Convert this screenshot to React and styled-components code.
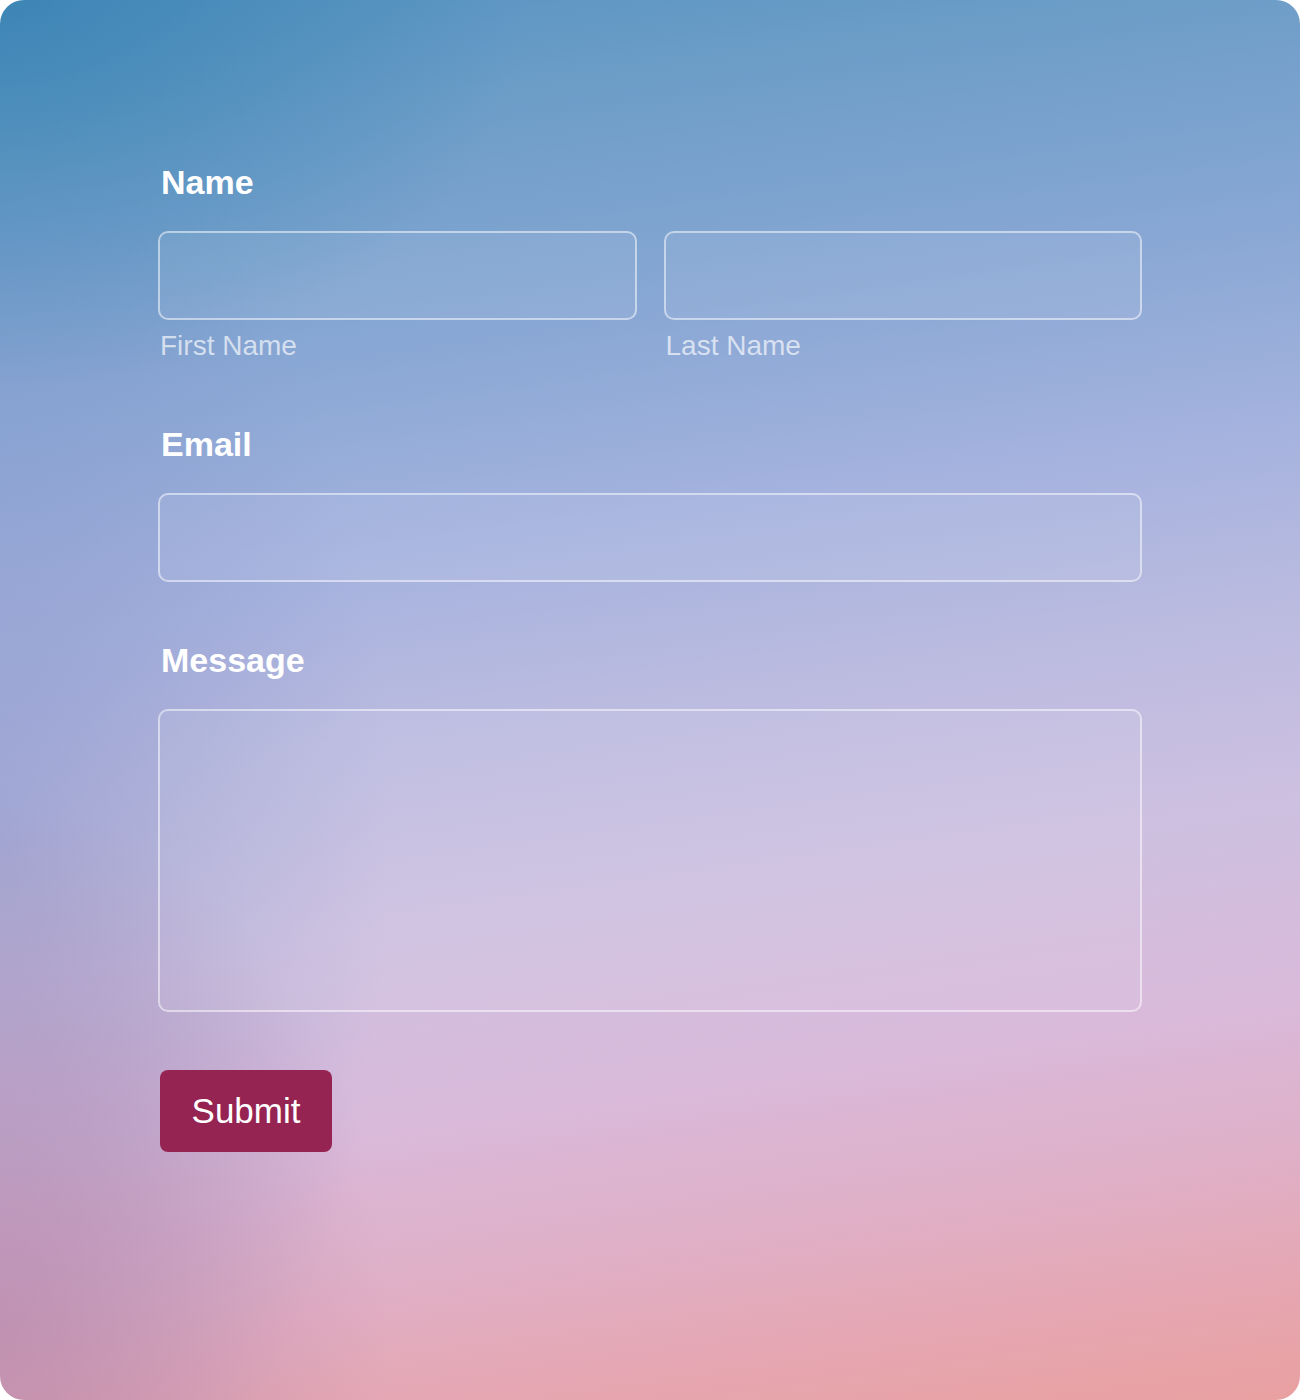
import styled, { createGlobalStyle } from 'styled-components'

const GlobalStyle = createGlobalStyle`
    html, body {
        margin: 0;
        padding: 0;
        background: #ffffff;
    }
    * {
        box-sizing: border-box;
    }
`

const Card = styled.div`
    width: 1300px;
    height: 1400px;
    border-radius: 24px;
    overflow: hidden;
    padding: 162px 158px 0 158px;
    font-family: "Liberation Sans", Arial, sans-serif;
    background:
        radial-gradient(ellipse 520px 700px at 0% 95%, rgba(180, 125, 160, 0.55), rgba(180, 125, 160, 0) 75%),
        radial-gradient(ellipse 700px 520px at 0% 0%, rgba(45, 125, 175, 0.6), rgba(45, 125, 175, 0) 75%),
        radial-gradient(ellipse 520px 1000px at 0% 60%, rgba(125, 140, 195, 0.45), rgba(125, 140, 195, 0) 75%),
        linear-gradient(172deg, #5592c0 0%, #6b9dc7 10%, #86a6d3 24%, #a4b2de 38%, #bbbbe0 50%, #cdc0e0 62%, #d9badb 74%, #dfb0c8 84%, #e5a7b3 92%, #e9a0a0 100%);
`

const Form = styled.form`
    display: flex;
    flex-direction: column;
`

const Field = styled.div`
    display: flex;
    flex-direction: column;
    margin-bottom: ${({ $gap }) => $gap}px;
`

const Label = styled.label`
    display: block;
    padding-left: 3px;
    margin-bottom: 29px;
    font-size: 34px;
    line-height: 40px;
    font-weight: 700;
    color: #ffffff;
`

const Row = styled.div`
    display: grid;
    grid-template-columns: 1fr 1fr;
    gap: 27px;
`

const Column = styled.div`
    display: flex;
    flex-direction: column;
`

const Input = styled.input`
    display: block;
    height: 89px;
    width: 100%;
    border: 2px solid rgba(255, 255, 255, 0.5);
    border-radius: 10px;
    background: rgba(255, 255, 255, 0.07);
    outline: none;
    padding: 0 20px;
    font-family: inherit;
    font-size: 27px;
    color: #ffffff;
`

const TextArea = styled.textarea`
    display: block;
    height: 303px;
    width: 100%;
    border: 2px solid rgba(255, 255, 255, 0.5);
    border-radius: 10px;
    background: rgba(255, 255, 255, 0.07);
    outline: none;
    resize: none;
    padding: 16px 20px;
    font-family: inherit;
    font-size: 27px;
    color: #ffffff;
`

const SubLabel = styled.span`
    margin-top: 10px;
    padding-left: 2px;
    font-size: 28px;
    line-height: 32px;
    color: rgba(255, 255, 255, 0.66);
`

const SubmitButton = styled.button`
    width: 172px;
    height: 82px;
    margin-left: 2px;
    border: none;
    border-radius: 8px;
    background: #962452;
    color: #ffffff;
    font-family: inherit;
    font-size: 35px;
    cursor: pointer;
`

const App = () => {
    return (
        <>
            <GlobalStyle />
            <Card>
                <Form onSubmit={(e) => e.preventDefault()}>
                    <Field $gap={62}>
                        <Label>Name</Label>
                        <Row>
                            <Column>
                                <Input type="text" name="firstName" />
                                <SubLabel>First Name</SubLabel>
                            </Column>
                            <Column>
                                <Input type="text" name="lastName" />
                                <SubLabel>Last Name</SubLabel>
                            </Column>
                        </Row>
                    </Field>
                    <Field $gap={58}>
                        <Label htmlFor="email">Email</Label>
                        <Input type="email" id="email" name="email" />
                    </Field>
                    <Field $gap={58}>
                        <Label htmlFor="message">Message</Label>
                        <TextArea id="message" name="message" />
                    </Field>
                    <div>
                        <SubmitButton type="submit">Submit</SubmitButton>
                    </div>
                </Form>
            </Card>
        </>
    )
}

export default App
